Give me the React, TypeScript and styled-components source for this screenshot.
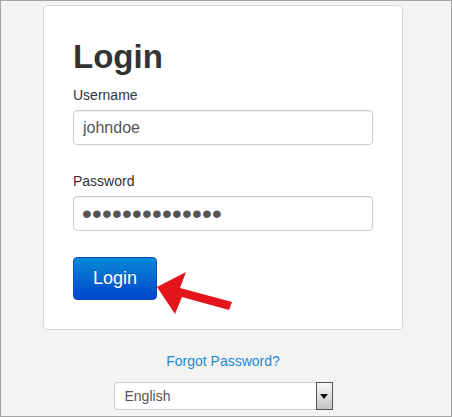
import React from "react";
import styled, { createGlobalStyle } from "styled-components";

const GlobalStyle = createGlobalStyle`
  html, body {
    margin: 0;
    padding: 0;
  }
  body {
    font-family: "Liberation Sans", Arial, sans-serif;
    color: #333;
  }
`;

export default function App() {
  return (
    <>
      <GlobalStyle />
      <Page>
        <Column>
          <Card>
            <Title>Login</Title>
            <Field>
              <Label htmlFor="username">Username</Label>
              <TextInput id="username" type="text" defaultValue="johndoe" readOnly />
            </Field>
            <Field>
              <Label htmlFor="password">Password</Label>
              <TextInput
                id="password"
                type="password"
                defaultValue="secretpassword"
                readOnly
                $secret
              />
            </Field>
            <ButtonRow>
              <LoginButton type="button">Login</LoginButton>
              <Pointer viewBox="0 0 170 60" width="170" height="60">
                <polygon
                  points="84,30 113,15 107,31 159,45 156,53 109,40 102,57"
                  fill="#e3141a"
                />
              </Pointer>
            </ButtonRow>
          </Card>
          <ForgotLink href="#">Forgot Password?</ForgotLink>
          <SelectWrap>
            <LanguageSelect defaultValue="en">
              <option value="en">English</option>
            </LanguageSelect>
            <ArrowBox>
              <svg width="8" height="5" viewBox="0 0 8 5">
                <polygon points="0,0 8,0 4,5" fill="#111" />
              </svg>
            </ArrowBox>
          </SelectWrap>
        </Column>
      </Page>
    </>
  );
}

///////// Styled Components /////////
const Page = styled.div`
  box-sizing: border-box;
  width: 452px;
  height: 417px;
  border: 1px solid #a3a3a3;
  background: #f3f3f1;
  padding: 4px 0 0 42px;
`;

const Column = styled.div`
  width: 360px;
  display: flex;
  flex-direction: column;
  align-items: center;
`;

const Card = styled.div`
  box-sizing: border-box;
  width: 360px;
  background: #fff;
  border: 1px solid #d6d6d6;
  border-radius: 5px;
  padding: 31px 29px 29px;
`;

const Title = styled.h1`
  margin: 0 0 8px;
  font-size: 33px;
  line-height: 40px;
  font-weight: 700;
  color: #333;
`;

const Field = styled.div`
  display: flex;
  flex-direction: column;
  margin-bottom: 26px;
`;

const Label = styled.label`
  font-size: 14px;
  line-height: 20px;
  color: #333;
  margin-bottom: 5px;
`;

const TextInput = styled.input<{ $secret?: boolean }>`
  box-sizing: border-box;
  width: 300px;
  height: 35px;
  margin: 0;
  padding: 0 ${(p) => (p.$secret ? "8px" : "9px")};
  border: 1px solid #cccccc;
  border-radius: 4px;
  box-shadow: inset 0 1px 1px rgba(0, 0, 0, 0.075);
  background: #fff;
  font-family: "Liberation Sans", Arial, sans-serif;
  font-size: ${(p) => (p.$secret ? "28px" : "16px")};
  color: #555;
  outline: none;
  letter-spacing: ${(p) => (p.$secret ? "0.2px" : "0")};
`;

const ButtonRow = styled.div`
  position: relative;
  display: flex;
`;

const LoginButton = styled.button`
  box-sizing: border-box;
  width: 84px;
  height: 43px;
  margin: 0;
  padding: 0;
  border: 1px solid #0a4bb8;
  border-radius: 4px;
  background: linear-gradient(to bottom, #0a8ad6, #0045cb);
  color: #fff;
  font-family: "Liberation Sans", Arial, sans-serif;
  font-size: 18px;
  text-shadow: 0 -1px 0 rgba(0, 0, 0, 0.25);
  cursor: pointer;
`;

const Pointer = styled.svg`
  position: absolute;
  left: 0;
  top: 0;
  overflow: visible;
  pointer-events: none;
`;

const ForgotLink = styled.a`
  margin-top: 22px;
  font-size: 14px;
  line-height: 18px;
  color: #1f8ad6;
  text-decoration: none;
`;

const SelectWrap = styled.div`
  position: relative;
  margin-top: 12px;
  width: 219px;
  height: 28px;
`;

const LanguageSelect = styled.select`
  box-sizing: border-box;
  appearance: none;
  width: 219px;
  height: 28px;
  margin: 0;
  padding: 0 0 0 10px;
  border: 1px solid #cccccc;
  border-radius: 4px;
  background: #fff;
  font-family: "Liberation Sans", Arial, sans-serif;
  font-size: 14px;
  color: #555;
  outline: none;
`;

const ArrowBox = styled.div`
  box-sizing: border-box;
  position: absolute;
  right: 0;
  top: 0;
  width: 17px;
  height: 28px;
  border: 1px solid #555;
  background: linear-gradient(to bottom, #fafafa, #c4c4c4);
  display: flex;
  align-items: center;
  justify-content: center;
  pointer-events: none;
`;
